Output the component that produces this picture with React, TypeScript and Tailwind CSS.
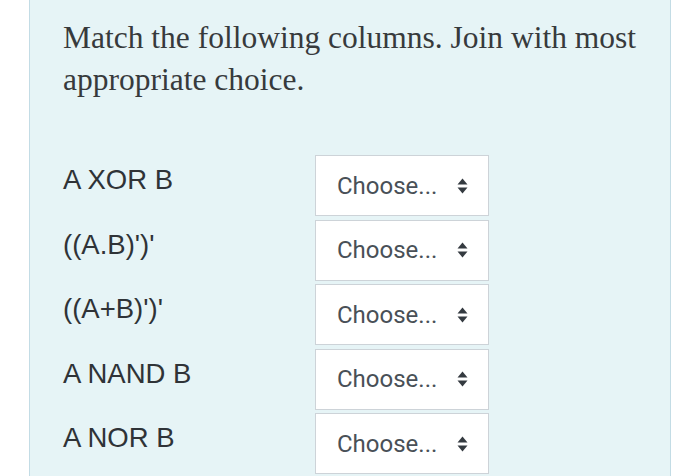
import React from 'react';

const rows = ['A XOR B', "((A.B)')'", "((A+B)')'", 'A NAND B', 'A NOR B'];

const UpDown: React.FC = () => (
  <svg width="11" height="18" viewBox="0 0 11 18" className="shrink-0">
    <path d="M5.5 1.5 L10.5 7.5 L0.5 7.5 Z" fill="#343a40" />
    <path d="M5.5 16.5 L10.5 10.5 L0.5 10.5 Z" fill="#343a40" />
  </svg>
);

export default function App() {
  return (
    <div className="h-[476px] w-[700px] overflow-hidden bg-white">
      <div className="ml-[29px] h-full w-[642px] border-x border-[#c3dce5] bg-[#e6f4f6] pl-[33px]">
        <p
          className="whitespace-nowrap pt-[17px] text-[31.5px] leading-[42px] text-[#373a3c]"
          style={{ fontFamily: '"Liberation Serif", "Times New Roman", serif' }}
        >
          Match the following columns. Join with most
          <br />
          appropriate choice.
        </p>

        <div className="mt-[54px] flex flex-col">
          {rows.map((label) => (
            <div key={label} className="flex h-[64.5px] items-start">
              <div
                className="w-[252px] pt-[10px] text-[27.5px] leading-[30px] text-[#2f3337]"
                style={{ fontFamily: '"Liberation Sans", Arial, sans-serif' }}
              >
                {label}
              </div>
              <div
                className="flex h-[61px] w-[174px] items-center justify-between border border-[#cdd3d8] bg-white pl-[21px] pr-[20px] text-[24px] text-[#495057]"
                style={{ fontFamily: 'Roboto, "Liberation Sans", Arial, sans-serif' }}
              >
                <span>Choose...</span>
                <UpDown />
              </div>
            </div>
          ))}
        </div>
      </div>
    </div>
  );
}
